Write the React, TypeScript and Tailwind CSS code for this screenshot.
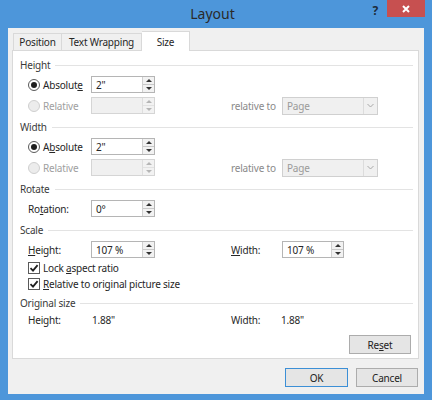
import React from "react";

const SectionHeader = ({ title, className = "" }: { title: string; className?: string }) => (
    <div className={`h-[18px] flex items-center gap-[5px] ${className}`}>
        <span className="text-[#3a3a3a]">{title}</span>
        <div className="flex-1 h-px bg-[#e3e3e3]" />
    </div>
);

const Spinner = ({ value, disabled, width }: { value: string; disabled?: boolean; width: string }) => (
    <div className={`${width} h-[17px] flex border ${disabled ? "border-[#d5d5d5] bg-[#f0f0f0]" : "border-[#b5b5b5] bg-white"}`}>
        <div className="flex-1 pl-[4px] flex items-center text-[#262626]">{value}</div>
        <div className={`w-[12px] flex flex-col border-l ${disabled ? "border-[#dedede]" : "border-[#d0d0d0]"} bg-[#f2f2f2]`}>
            <div className="flex-1 flex items-center justify-center">
                <div className={`w-0 h-0 border-l-[3px] border-r-[3px] border-b-[3px] border-l-transparent border-r-transparent ${disabled ? "border-b-[#b5b5b5]" : "border-b-[#333]"}`} />
            </div>
            <div className={`h-px ${disabled ? "bg-[#e2e2e2]" : "bg-[#c8c8c8]"}`} />
            <div className="flex-1 flex items-center justify-center">
                <div className={`w-0 h-0 border-l-[3px] border-r-[3px] border-t-[3px] border-l-transparent border-r-transparent ${disabled ? "border-t-[#b5b5b5]" : "border-t-[#333]"}`} />
            </div>
        </div>
    </div>
);

const Radio = ({ checked, disabled, children }: { checked?: boolean; disabled?: boolean; children: React.ReactNode }) => (
    <div className="w-[63px] flex items-center gap-[3px]">
        <div className={`w-[12px] h-[12px] rounded-full border flex items-center justify-center ${disabled ? "border-[#cfcfcf] bg-[#ececec]" : "border-[#5a5a5a] bg-white"}`}>
            {checked && <div className="w-[6px] h-[6px] rounded-full bg-[#1f1f1f]" />}
        </div>
        <span className={disabled ? "text-[#a0a0a0]" : "text-[#262626]"}>{children}</span>
    </div>
);

const Check = ({ children }: { children: React.ReactNode }) => (
    <div className="h-[16px] flex items-center gap-[3px]">
        <div className="w-[12px] h-[12px] border border-[#5a5a5a] bg-white flex items-center justify-center">
            <svg width="10" height="10" viewBox="0 0 10 10">
                <path d="M1.5 5.2 L4 7.6 L8.6 2.2" fill="none" stroke="#1f1f1f" strokeWidth="1.8" />
            </svg>
        </div>
        <span>{children}</span>
    </div>
);

const PageSelect = () => (
    <div className="w-[96px] h-[18px] flex border border-[#d0d0d0] bg-[#f0f0f0]">
        <div className="flex-1 pl-[4px] flex items-center text-[#9a9a9a]">Page</div>
        <div className="w-[14px] border-l border-[#dcdcdc] flex items-center justify-center">
            <svg width="7" height="5" viewBox="0 0 7 5">
                <path d="M0.5 1 L3.5 4 L6.5 1" fill="none" stroke="#a8a8a8" strokeWidth="1" />
            </svg>
        </div>
    </div>
);

const Btn = ({ children, primary, width }: { children: React.ReactNode; primary?: boolean; width: string }) => (
    <button className={`${width} h-[19px] flex items-center justify-center bg-[#e5e5e5] border ${primary ? "border-[#3c8fd6]" : "border-[#acacac]"} text-[#222]`}>
        {children}
    </button>
);

const SizeBlock = ({ checkedLabel }: { checkedLabel: React.ReactNode }) => (
    <>
        <div className="h-[21px] flex items-center pl-[8px]">
            <Radio checked>{checkedLabel}</Radio>
            <Spinner value={'2"'} width="w-[64px]" />
        </div>
        <div className="h-[21px] flex items-center pl-[8px]">
            <Radio disabled>Relative</Radio>
            <Spinner value="" disabled width="w-[64px]" />
            <div className="w-[76px]" />
            <span className="w-[51px] text-[#8a8a8a]">relative to</span>
            <PageSelect />
        </div>
    </>
);

export default function App() {
    return (
        <div className="w-[432px] h-[400px] bg-[#4d96da] flex flex-col font-['Noto_Sans',sans-serif] text-[10px] tracking-[-0.2px] leading-none text-[#262626] overflow-hidden">
            {/* Title bar */}
            <div className="h-[28px] flex items-start">
                <div className="flex-1" />
                <div className="h-[28px] flex items-center text-[14px] tracking-normal text-[#2a2a2a]">Layout</div>
                <div className="flex-1 flex justify-end items-start pr-[7px]">
                    <span className="mt-[5px] mr-[9px] text-[12px] font-bold text-[#1d2b3a]">?</span>
                    <div className="w-[38px] h-[17px] bg-[#c75050] flex items-center justify-center">
                        <svg width="8" height="8" viewBox="0 0 8 8">
                            <path d="M1 1 L7 7 M7 1 L1 7" stroke="#fff" strokeWidth="2" />
                        </svg>
                    </div>
                </div>
            </div>

            {/* Client area */}
            <div className="mx-[8px] h-[366px] bg-[#f0f0f0] flex flex-col">
                <div className="h-[22px] pl-[5px] flex items-end">
                    <div className="w-[49px] h-[17px] border border-b-0 border-[#d9d9d9] bg-[#f0f0f0] flex items-center justify-center">Position</div>
                    <div className="w-[80px] h-[17px] border border-b-0 border-l-0 border-[#d9d9d9] bg-[#f0f0f0] flex items-center justify-center">Text Wrapping</div>
                    <div className="w-[48px] h-[20px] -mb-px relative z-10 border border-b-0 border-l-0 border-[#d9d9d9] bg-white flex items-center justify-center">Size</div>
                </div>

                <div className="ml-[4px] w-[407px] h-[309px] bg-white border border-[#d9d9d9] flex flex-col pt-[5px] pl-[7px] pr-[5px]">
                    <SectionHeader title="Height" />
                    <SizeBlock checkedLabel={<>Absolut<u>e</u></>} />

                    <SectionHeader title="Width" className="mt-[2px]" />
                    <SizeBlock checkedLabel={<>A<u>b</u>solute</>} />

                    <SectionHeader title="Rotate" className="mt-[2px]" />
                    <div className="h-[21px] flex items-center pl-[8px]">
                        <span className="w-[63px]">Ro<u>t</u>ation:</span>
                        <Spinner value="0°" width="w-[64px]" />
                    </div>

                    <SectionHeader title="Scale" className="mt-[2px]" />
                    <div className="h-[21px] flex items-center pl-[8px]">
                        <span className="w-[63px]"><u>H</u>eight:</span>
                        <Spinner value="107 %" width="w-[64px]" />
                        <div className="w-[76px]" />
                        <span className="w-[51px]"><u>W</u>idth:</span>
                        <Spinner value="107 %" width="w-[62px]" />
                    </div>
                    <div className="pl-[8px]">
                        <Check>Lock <u>a</u>spect ratio</Check>
                        <Check><u>R</u>elative to original picture size</Check>
                    </div>

                    <SectionHeader title="Original size" className="mt-[2px]" />
                    <div className="h-[16px] flex items-center pl-[8px]">
                        <span className="w-[64px]">Height:</span>
                        <span className="w-[139px]">1.88"</span>
                        <span className="w-[50px]">Width:</span>
                        <span>1.88"</span>
                    </div>

                    <div className="flex-1 flex justify-end items-start pt-[7px] pr-[2px]">
                        <Btn width="w-[62px]">Re<u>s</u>et</Btn>
                    </div>
                </div>

                <div className="mt-[9px] flex justify-end gap-[8px] pr-[6px]">
                    <Btn primary width="w-[63px]">OK</Btn>
                    <Btn width="w-[62px]">Cancel</Btn>
                </div>
            </div>
        </div>
    );
}
